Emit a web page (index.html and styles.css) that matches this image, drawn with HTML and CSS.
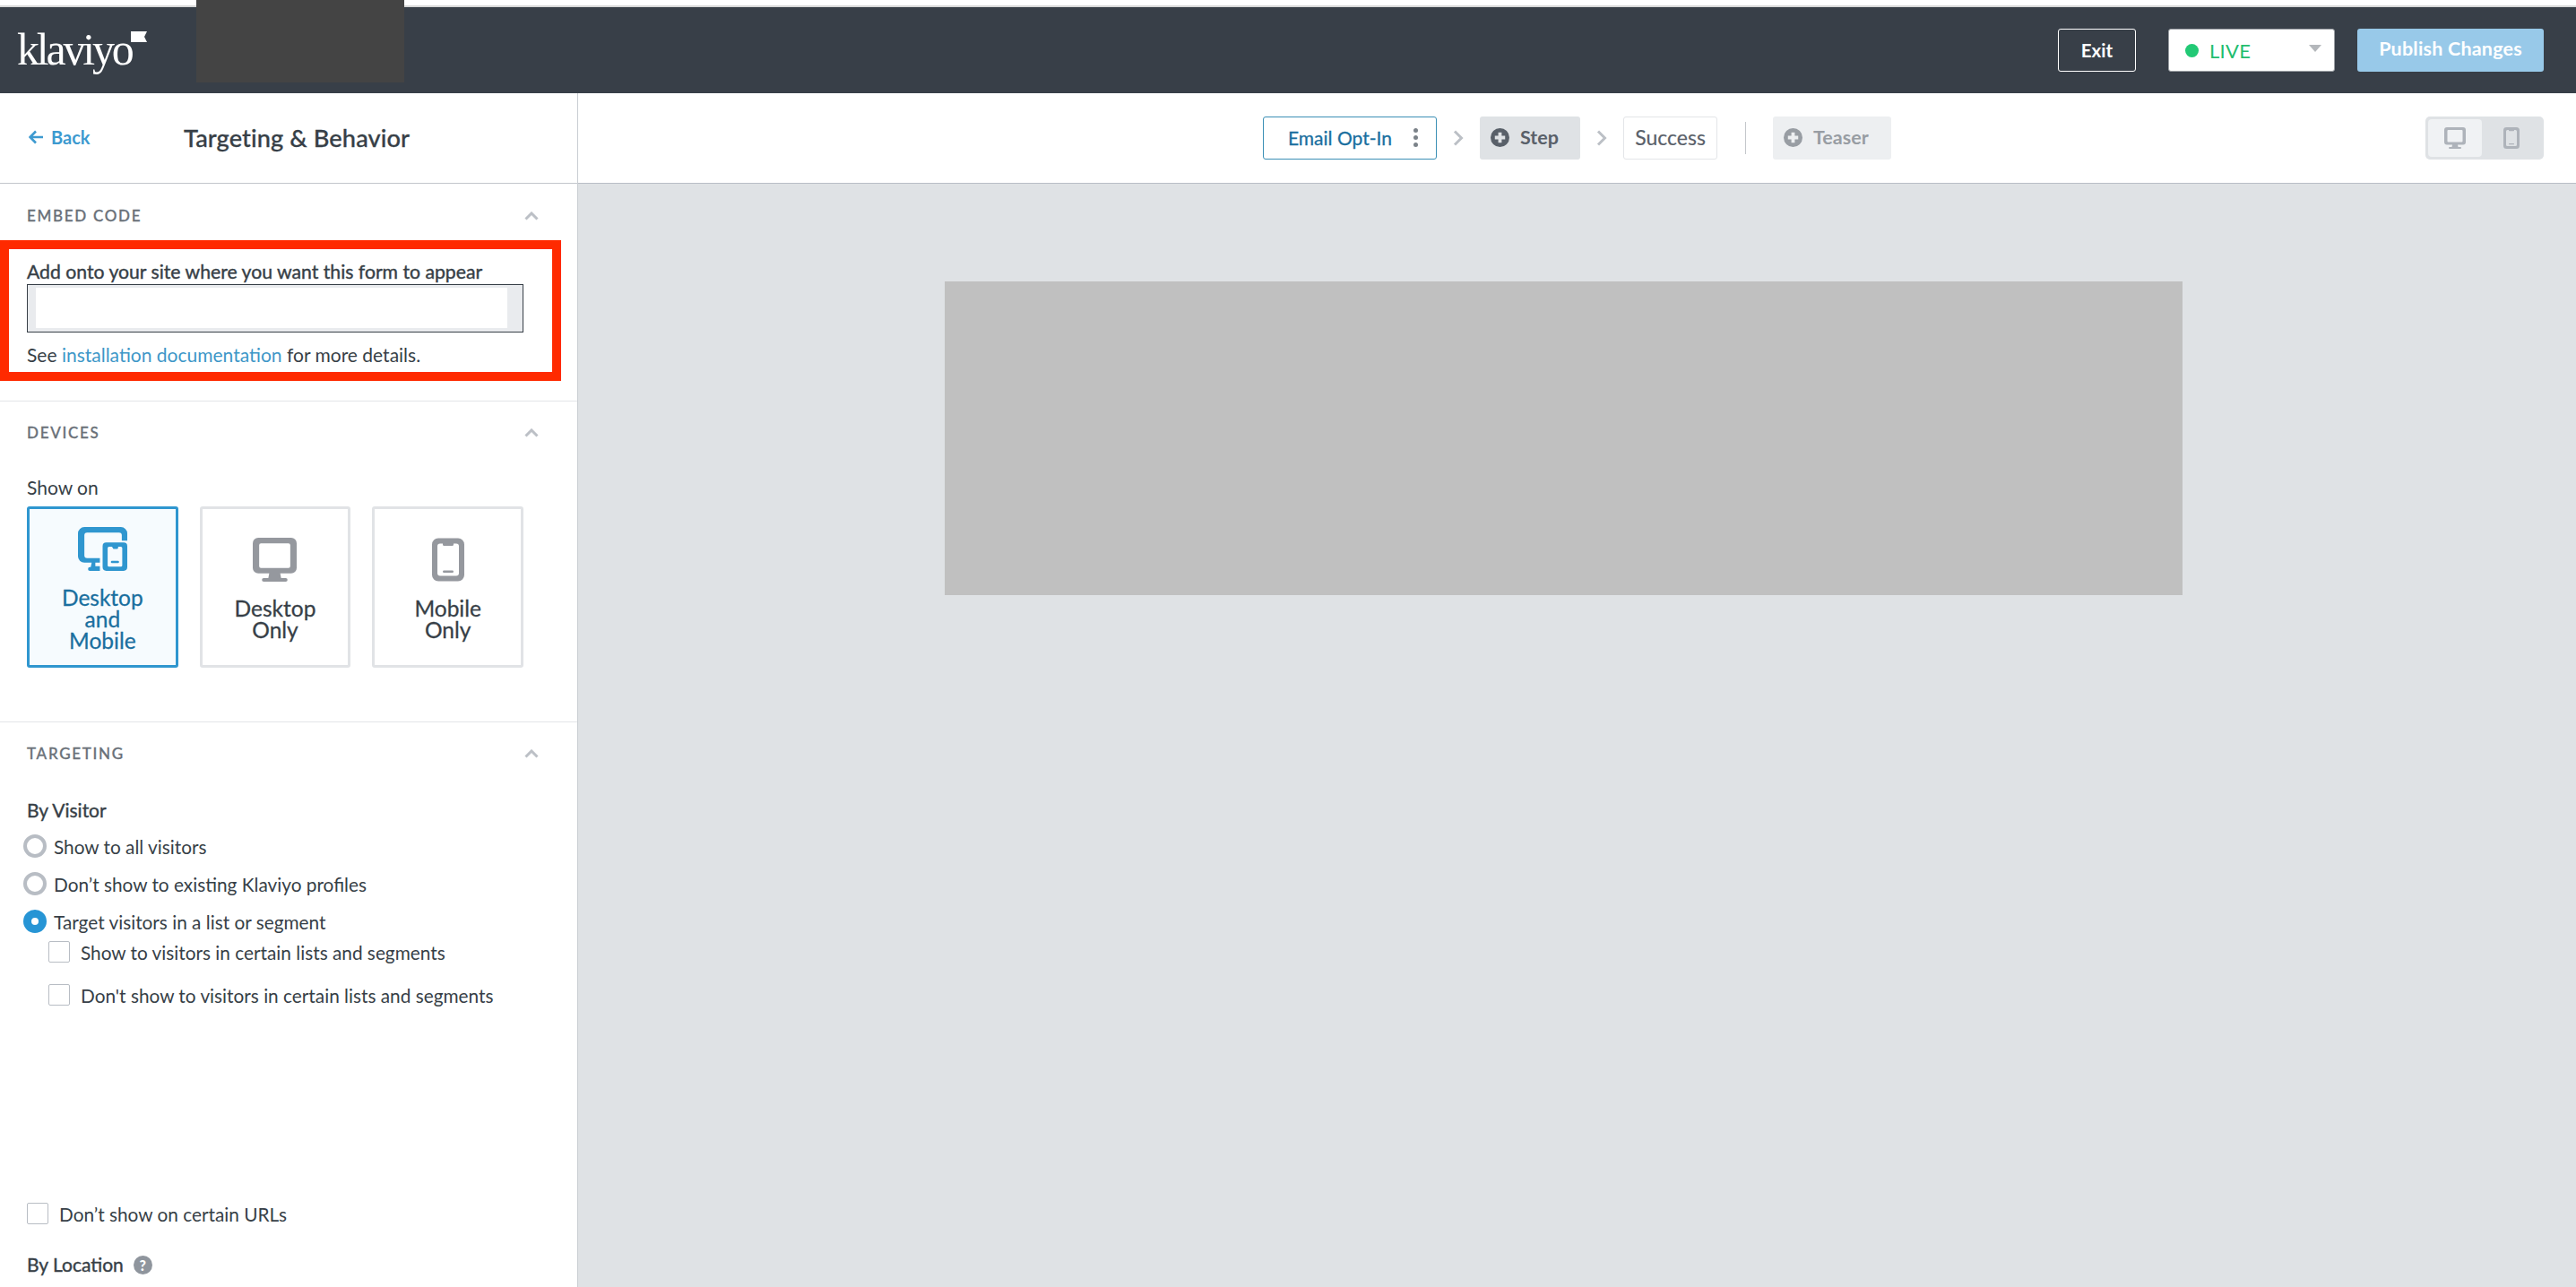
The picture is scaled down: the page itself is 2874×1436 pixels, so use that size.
FILE: index.html
```html
<!DOCTYPE html>
<html lang="en">
<head>
<meta charset="utf-8">
<title>Targeting &amp; Behavior</title>
<link rel="stylesheet" href="styles.css">
</head>
<body>
<svg class="defs" width="0" height="0" aria-hidden="true">
  <symbol id="i-desktop" viewBox="0 0 48 48"><path fill-rule="evenodd" d="M6 0h36a6 6 0 0 1 6 6v27a6 6 0 0 1-6 6H30l1 5h5a2 2 0 0 1 0 4H12a2 2 0 0 1 0-4h5l1-5H6a6 6 0 0 1-6-6V6a6 6 0 0 1 6-6Zm3 6a2 2 0 0 0-2 2v23a2 2 0 0 0 2 2h30a2 2 0 0 0 2-2V8a2 2 0 0 0-2-2Z"/></symbol>
  <symbol id="i-phone" viewBox="0 0 36 48"><path fill-rule="evenodd" d="M7 0h22a7 7 0 0 1 7 7v34a7 7 0 0 1-7 7H7a7 7 0 0 1-7-7V7a7 7 0 0 1 7-7Zm5 6H9a3 3 0 0 0-3 3v30a3 3 0 0 0 3 3h18a3 3 0 0 0 3-3V9a3 3 0 0 0-3-3h-3v1a1.500 1.500 0 0 1-1.500 1.500h-9A1.500 1.500 0 0 1 12 7Z"/><rect x="12" y="36" width="12" height="2.500" rx="1.200"/></symbol>
  <symbol id="i-both" viewBox="0 0 54 48"><path d="M7 0h40a7 7 0 0 1 7 7v8h-6V9a3 3 0 0 0-3-3H10a3 3 0 0 0-3 3v22a3 3 0 0 0 3 3h14v5h-5v4h5v5H13a2 2 0 0 1 0-4h1l1-5H7a7 7 0 0 1-7-7V7a7 7 0 0 1 7-7Z"/><path fill-rule="evenodd" d="M31 17h19a4 4 0 0 1 4 4v23a4 4 0 0 1-4 4H31a4 4 0 0 1-4-4V21a4 4 0 0 1 4-4Zm6 4.500h-3a1.500 1.500 0 0 0-1.500 1.500v19a1.500 1.500 0 0 0 1.500 1.500h13a1.500 1.500 0 0 0 1.500-1.500V23a1.500 1.500 0 0 0-1.500-1.500h-3v1a1.500 1.500 0 0 1-1.500 1.500h-3a1.500 1.500 0 0 1-1.500-1.500Z"/><rect x="36" y="37" width="9" height="2.500" rx="1.200"/></symbol>
  <symbol id="i-plus" viewBox="0 0 22 22"><path fill-rule="evenodd" d="M11 0a11 11 0 1 1 0 22a11 11 0 0 1 0-22Zm-2 5v4H5v4h4v4h4v-4h4V9h-4V5Z"/></symbol>
  <symbol id="i-chev-up" viewBox="0 0 16 10"><path d="M1.500 8.500 8 2l6.500 6.500" fill="none" stroke="currentColor" stroke-width="3"/></symbol>
  <symbol id="i-chev-right" viewBox="0 0 12 18"><path d="M2 1.500 9.500 9 2 16.500" fill="none" stroke="currentColor" stroke-width="3"/></symbol>
</svg>

<div class="redacted"></div>
<div class="strip"></div>
<header class="topbar">
  <div class="logo"><span class="logo-word">klaviyo</span><svg class="logo-flag" viewBox="0 0 18 12"><path d="M0 0h18l-3 6 3 6H0Z"/></svg></div>
  <div class="top-actions">
    <button class="btn-exit">Exit</button>
    <div class="status"><span class="dot"></span><span class="live">LIVE</span><span class="caret"></span></div>
    <button class="btn-publish">Publish Changes</button>
  </div>
</header>

<div class="workspace">
  <aside class="sidebar">
    <div class="side-head">
      <a class="back"><svg class="back-arrow" viewBox="0 0 16 16"><path d="M8 1.500 1.500 8 8 14.500M2 8h14" fill="none" stroke="currentColor" stroke-width="2.600"/></svg>Back</a>
      <h1 class="side-title">Targeting &amp; Behavior</h1>
    </div>

    <section class="section section-embed">
      <div class="section-head"><h2>EMBED CODE</h2><svg class="chev-up"><use href="#i-chev-up"/></svg></div>
      <div class="callout">
        <div class="embed-label">Add onto your site where you want this form to appear</div>
        <div class="code-box"><div class="code-inner"></div></div>
        <p class="embed-note">See <a class="link">installation documentation</a> for more details.</p>
      </div>
    </section>

    <section class="section section-devices">
      <div class="section-head"><h2>DEVICES</h2><svg class="chev-up"><use href="#i-chev-up"/></svg></div>
      <div class="show-on">Show on</div>
      <div class="cards">
        <div class="card card-active"><svg class="ic ic-both"><use href="#i-both"/></svg><span>Desktop<br>and<br>Mobile</span></div>
        <div class="card"><svg class="ic ic-desktop"><use href="#i-desktop"/></svg><span>Desktop<br>Only</span></div>
        <div class="card"><svg class="ic ic-phone"><use href="#i-phone"/></svg><span>Mobile<br>Only</span></div>
      </div>
    </section>

    <section class="section section-targeting">
      <div class="section-head"><h2>TARGETING</h2><svg class="chev-up"><use href="#i-chev-up"/></svg></div>
      <div class="group-title by-visitor">By Visitor</div>
      <div class="radios">
        <div class="radio-row"><span class="radio"></span>Show to all visitors</div>
        <div class="radio-row"><span class="radio"></span>Don’t show to existing Klaviyo profiles</div>
        <div class="radio-row"><span class="radio radio-on"></span>Target visitors in a list or segment</div>
      </div>
      <div class="checks">
        <div class="check-row"><span class="check"></span>Show to visitors in certain lists and segments</div>
        <div class="check-row"><span class="check"></span>Don't show to visitors in certain lists and segments</div>
      </div>
      <div class="check-row url-row"><span class="check"></span>Don’t show on certain URLs</div>
      <div class="group-title by-location">By Location <span class="help">?</span></div>
    </section>
  </aside>

  <main class="main">
    <div class="main-head">
      <div class="stepper">
        <div class="step step-current">Email Opt-In<span class="kebab"><i></i><i></i><i></i></span></div>
        <svg class="chev-right"><use href="#i-chev-right"/></svg>
        <div class="step step-add"><svg class="plus"><use href="#i-plus"/></svg>Step</div>
        <svg class="chev-right"><use href="#i-chev-right"/></svg>
        <div class="step step-success">Success</div>
        <span class="step-sep"></span>
        <div class="step step-add step-teaser"><svg class="plus"><use href="#i-plus"/></svg>Teaser</div>
      </div>
      <div class="view-toggle">
        <div class="view view-on"><svg class="view-desktop"><use href="#i-desktop"/></svg></div>
        <div class="view"><svg class="view-phone"><use href="#i-phone"/></svg></div>
      </div>
    </div>
    <div class="canvas"><div class="preview"></div></div>
  </main>
</div>
</body>
</html>
```

FILE: styles.css
```css
* { box-sizing: border-box; }
html, body { margin: 0; height: 100%; }
body {
  height: 1436px;
  overflow: hidden;
  position: relative;
  display: flex;
  flex-direction: column;
  background: #fff;
  color: #373f47;
  font-family: "Lato", "Open Sans", sans-serif;
  font-size: 20.800px;
}
.defs { position: absolute; }
.strip { height: 8px; background: #fff; border-bottom: 2px solid #d8d8d8; flex: none; }
.redacted { position: absolute; left: 219px; top: 0; width: 232px; height: 92px; background: #444; z-index: 2; }

.topbar { height: 96px; flex: none; background: #383f48; display: flex; align-items: center; justify-content: space-between; padding: 0 36px 0 19px; }
.logo { display: flex; align-items: flex-start; color: #fff; height: 52px; margin-top: 8px; }
.logo-word { font-family: "Liberation Serif", serif; font-size: 50px; line-height: 42px; letter-spacing: -3.200px; }
.logo-flag { width: 18px; height: 12px; fill: #fff; margin-left: -1px; margin-top: 1px; }
.top-actions { display: flex; align-items: center; }
.btn-exit { width: 87px; height: 48px; background: transparent; border: 1.500px solid #fff; border-radius: 3px; color: #fff; font: 700 20.500px "Lato", sans-serif; margin-right: 36px; padding: 0; }
.status { width: 186px; height: 48px; background: #fff; border: 1px solid #9a9ea3; border-radius: 3px; display: flex; align-items: center; padding-left: 18px; margin-right: 25px; }
.dot { width: 15px; height: 15px; border-radius: 50%; background: #22c975; margin-right: 12px; }
.live { color: #22bd6e; font-size: 22px; letter-spacing: .3px; }
.caret { width: 0; height: 0; border-left: 7px solid transparent; border-right: 7px solid transparent; border-top: 8px solid #b4b7bb; margin-left: 65px; margin-top: -4px; }
.btn-publish { width: 208px; height: 48px; background: #98c9e9; border: 0; border-radius: 3px; color: #fff; font: 700 21.500px "Lato", sans-serif; padding: 0 0 5px; letter-spacing: .2px; }

.workspace { flex: 1; display: flex; min-height: 0; }
.sidebar { width: 645px; flex: none; border-right: 1px solid #c9cdd2; overflow: hidden; }
.side-head { height: 101px; border-bottom: 1px solid #c2c6cb; display: flex; align-items: center; padding-left: 32px; }
.back { display: flex; align-items: center; color: #3d9ad0; font-weight: 700; font-size: 20px; width: 173px; margin-top: -2px; }
.back-arrow { width: 16px; height: 16px; margin-right: 9px; }
.side-title { margin: 0 0 2px; font-size: 27.200px; font-weight: 500; color: #373f47; letter-spacing: .1px; -webkit-text-stroke: .3px #373f47; }

.section { border-bottom: 1px solid #e3e5e8; padding-left: 30px; }
.section-head { display: flex; justify-content: space-between; align-items: center; height: 20px; padding-right: 43px; }
.section-head h2 { margin: 0; font-size: 17px; font-weight: 500; letter-spacing: 1.700px; color: #6a7179; line-height: 20px; -webkit-text-stroke: .3px #6a7179; }
.chev-up { width: 16px; height: 10px; color: #bcc0c6; }
.section-embed { padding-top: 26px; padding-left: 0; padding-bottom: 22px; }
.section-embed .section-head { padding-left: 30px; margin-bottom: 17px; }
.callout { width: 626px; border: 10px solid #ff2a00; padding: 13px 32px 7px 20px; }
.embed-label { font-size: 21.200px; line-height: 24px; -webkit-text-stroke: .4px #373f47; }
.code-box { height: 54px; margin-top: 2px; border: 1px solid #373f47; background: #e9ebee; padding: 3px 17px 4px 9px; }
.code-inner { height: 100%; background: #fff; }
.embed-note { margin: 13px 0 0; line-height: 24px; font-size: 21px; color: #373f47; }
.link { color: #3d97c8; }

.section-devices { padding-top: 25px; padding-bottom: 60px; height: 358px; }
.show-on { line-height: 24px; margin-top: 39px; font-size: 21px; }
.cards { display: grid; grid-template-columns: repeat(3, 1fr); gap: 24px; width: 554px; margin-top: 9px; }
.card { height: 180px; border: 3px solid #e1e3e6; border-radius: 3px; display: flex; flex-direction: column; align-items: center; justify-content: center; padding-top: 5px; text-align: center; font-size: 24.500px; line-height: 24px; -webkit-text-stroke: .3px #373f47; color: #373f47; fill: #95989e; background: #fff; }
.card-active { border-color: #2f96cf; background: #f6fbfe; color: #1a6f9f; fill: #2f96cf; -webkit-text-stroke: .3px #1a6f9f; }
.ic { height: 49px; margin-bottom: 18px; flex: none; -webkit-text-stroke: 0; }
.ic-both { width: 55px; }
.ic-desktop { width: 49px; }
.ic-phone { width: 36px; }

.section-targeting { padding-top: 25px; border-bottom: 0; }
.group-title { line-height: 24px; font-size: 21px; -webkit-text-stroke: .4px #373f47; }
.by-visitor { margin-top: 41px; }
.radios { margin-top: 15px; margin-left: -4px; display: flex; flex-direction: column; gap: 16px; }
.radio-row { display: flex; align-items: center; gap: 8px; height: 26px; }
.radio { width: 26px; height: 26px; border-radius: 50%; border: 4px solid #b8bdc4; background: #fff; flex: none; }
.radio-on { border: 9px solid #2795d5; }
.checks { margin: 9px 0 0 24px; display: flex; flex-direction: column; gap: 24px; }
.check-row { display: flex; align-items: center; gap: 12px; height: 24px; }
.check { width: 24px; height: 24px; border: 1px solid #b8bdc4; border-radius: 2px; background: #fff; flex: none; }
.url-row { margin-top: 220px; gap: 12px; }
.by-location { margin-top: 33px; display: flex; align-items: center; gap: 11px; }
.help { width: 21px; height: 21px; border-radius: 50%; background: #8f959d; color: #fff; font-size: 16px; font-weight: 900; line-height: 21px; text-align: center; -webkit-text-stroke: 0; }

.main { flex: 1; display: flex; flex-direction: column; min-width: 0; }
.main-head { height: 101px; flex: none; border-bottom: 1px solid #b8bdc6; display: flex; align-items: center; justify-content: space-between; padding: 0 36px 0 764px; }
.stepper { display: flex; align-items: center; }
.step { height: 48px; border-radius: 3px; display: flex; align-items: center; font-size: 21px; padding-bottom: 2px; }
.step-current { width: 194px; border: 1.500px solid #3b8fb5; color: #1a6f9f; padding-left: 27px; position: relative; -webkit-text-stroke: .3px #1a6f9f; }
.kebab { position: absolute; right: 20px; top: 12px; display: flex; flex-direction: column; gap: 3px; }
.kebab i { width: 5px; height: 5px; border-radius: 50%; background: #7b8289; }
.chev-right { width: 12px; height: 18px; color: #bcc0c6; margin: 0 18px; }
.step-add { width: 112px; background: #dfe2e5; color: #596069; padding-left: 12px; fill: #596069; font-weight: 700; font-size: 21.500px; }
.plus { width: 21px; height: 21px; margin-right: 12px; flex: none; }
.step-success { width: 105px; border: 1.500px solid #e3e5e8; justify-content: center; color: #596069; font-size: 23px; -webkit-text-stroke: .2px #596069; }
.step-sep { width: 1px; height: 36px; background: #c4c7cb; margin: 0 30px 0 31px; }
.step-teaser { width: 132px; background: #edeff1; color: #989da3; fill: #989da3; }
.view-toggle { width: 132px; height: 48px; background: #dfe2e5; border-radius: 5px; display: flex; padding: 3px; fill: #aeb3ba; }
.view { display: flex; align-items: center; justify-content: center; flex: 1; border-radius: 4px; }
.view-on { flex: none; width: 60px; background: #f0f2f4; }
.view-desktop { width: 24px; height: 24px; }
.view-phone { width: 18px; height: 24px; }
.canvas { flex: 1; background: #dfe2e5; padding: 109px 0 0 409px; }
.preview { width: 1381px; height: 350px; background: #c0c0c0; }
```
